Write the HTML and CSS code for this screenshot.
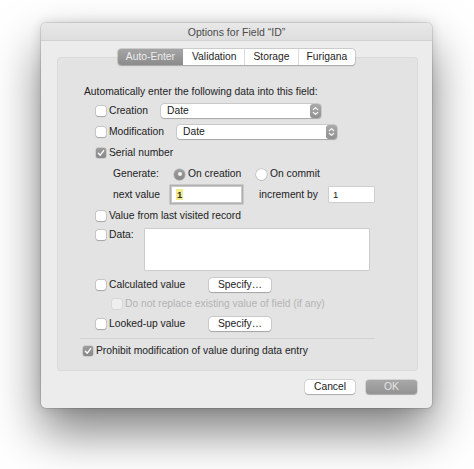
FILE: index.html
```html
<!DOCTYPE html>
<html>
<head>
<meta charset="utf-8">
<link rel="stylesheet" href="styles.css">
</head>
<body>
<div class="window">
  <div class="titlebar">Options for Field “ID”</div>
  <div class="tabbar">
    <div class="tabs">
      <span class="tab selected">Auto-Enter</span>
      <span class="tab">Validation</span>
      <span class="tab">Storage</span>
      <span class="tab">Furigana</span>
    </div>
  </div>
  <div class="panel">
    <div class="heading">Automatically enter the following data into this field:</div>

    <div class="row opt gap5">
      <span class="cb"></span><span class="lbl w-creation">Creation</span>
      <span class="popup"><span class="popup-text">Date</span><span class="stepper"><svg viewBox="0 0 11 14" width="11" height="14"><path d="M3.3 5.6 L5.5 3.6 L7.7 5.6 M3.3 8.4 L5.5 10.4 L7.7 8.4" fill="none" stroke="#fff" stroke-width="1.2" stroke-linecap="round" stroke-linejoin="round"/></svg></span></span>
    </div>

    <div class="row opt">
      <span class="cb"></span><span class="lbl w-modification">Modification</span>
      <span class="popup"><span class="popup-text">Date</span><span class="stepper"><svg viewBox="0 0 11 14" width="11" height="14"><path d="M3.3 5.6 L5.5 3.6 L7.7 5.6 M3.3 8.4 L5.5 10.4 L7.7 8.4" fill="none" stroke="#fff" stroke-width="1.2" stroke-linecap="round" stroke-linejoin="round"/></svg></span></span>
    </div>

    <div class="row opt">
      <span class="cb checked"><svg viewBox="0 0 10 10" width="10" height="10"><path d="M2.4 5.2 L4.3 7.2 L7.7 2.7" fill="none" stroke="#fff" stroke-width="1.4" stroke-linecap="round" stroke-linejoin="round"/></svg></span><span class="lbl">Serial number</span>
    </div>

    <div class="row sub">
      <span class="lbl w-generate">Generate:</span>
      <span class="radio on"></span><span class="lbl w-oncreation">On creation</span>
      <span class="radio"></span><span class="lbl">On commit</span>
    </div>

    <div class="row sub field-row gap6">
      <span class="lbl w-nextvalue">next value</span>
      <span class="field focused"><span class="hl">1</span></span>
      <span class="lbl w-increment">increment by</span>
      <span class="field small">1</span>
    </div>

    <div class="row opt">
      <span class="cb"></span><span class="lbl">Value from last visited record</span>
    </div>

    <div class="row opt data-row gap6">
      <span class="cb"></span><span class="lbl w-data">Data:</span>
      <span class="textarea"></span>
    </div>

    <div class="row opt gap8">
      <span class="cb"></span><span class="lbl w-calc">Calculated value</span>
      <span class="btn specify">Specify…</span>
    </div>

    <div class="row sub-cb gap5">
      <span class="cb disabled"></span><span class="lbl dim">Do not replace existing value of field (if any)</span>
    </div>

    <div class="row opt gap6">
      <span class="cb"></span><span class="lbl w-calc">Looked-up value</span>
      <span class="btn specify">Specify…</span>
    </div>

    <div class="separator"></div>

    <div class="row top-opt gap5">
      <span class="cb checked"><svg viewBox="0 0 10 10" width="10" height="10"><path d="M2.4 5.2 L4.3 7.2 L7.7 2.7" fill="none" stroke="#fff" stroke-width="1.4" stroke-linecap="round" stroke-linejoin="round"/></svg></span><span class="lbl">Prohibit modification of value during data entry</span>
    </div>
  </div>
  <div class="buttons">
    <span class="btn cancel">Cancel</span>
    <span class="btn ok">OK</span>
  </div>
</div>
</body>
</html>
```

FILE: styles.css
```css
html, body {
  margin: 0;
  padding: 0;
}
body {
  width: 474px;
  height: 469px;
  overflow: hidden;
  background: #ffffff;
  padding: 23px 0 0 41px;
  box-sizing: border-box;
  font-family: "Liberation Sans", Arial, sans-serif;
  font-size: 10.3px;
  color: #222222;
}
.window {
  width: 391px;
  height: 385px;
  box-sizing: border-box;
  background: #ececec;
  border-radius: 5px;
  box-shadow: 0 24px 48px rgba(0, 0, 0, 0.5), 0 0 12px rgba(0, 0, 0, 0.14), 0 0 0 1px rgba(0, 0, 0, 0.1);
}
.titlebar {
  height: 18px;
  line-height: 18px;
  text-align: center;
  font-size: 10.5px;
  color: #4b4b4b;
  background: linear-gradient(#e8e8e8, #dedede);
  border-bottom: 1px solid #d2d2d2;
  box-sizing: border-box;
  border-radius: 5px 5px 0 0;
}
.tabbar {
  margin-top: 8px;
  display: flex;
  justify-content: center;
  position: relative;
  z-index: 1;
}
.tabs {
  display: flex;
  height: 16px;
  background: #ffffff;
  border-radius: 3px;
  box-shadow: 0 0 0 0.5px rgba(0, 0, 0, 0.2), 0 0.5px 1.5px rgba(0, 0, 0, 0.2);
}
.tab {
  padding: 0 8px;
  line-height: 16px;
  border-left: 1px solid #dcdcdc;
  color: #1e1e1e;
}
.tab:first-child {
  border-left: none;
}
.tab.selected {
  background: linear-gradient(#a5a5a5, #8b8b8b);
  color: #ededed;
  border-radius: 3px 0 0 3px;
}
.tab.selected + .tab {
  border-left-color: transparent;
}
.panel {
  margin: -8px 14px 0 16px;
  height: 314px;
  box-sizing: border-box;
  padding-top: 28px;
  background: #e3e3e3;
  border-radius: 4px;
  box-shadow: inset 0 0 0 1px rgba(0, 0, 0, 0.04);
}
.heading {
  line-height: 14px;
  padding-left: 27px;
}
.row {
  display: flex;
  align-items: center;
  height: 14px;
  margin-top: 7px;
  white-space: nowrap;
}
.row.gap5 { margin-top: 5px; }
.row.gap6 { margin-top: 6px; }
.row.gap8 { margin-top: 8px; }
.row.opt { padding-left: 39px; }
.row.sub { padding-left: 56px; }
.row.sub-cb { padding-left: 55px; }
.row.top-opt { padding-left: 26px; }
.row.field-row { height: 15px; }
.row.data-row {
  height: 41px;
  align-items: flex-start;
}
.data-row .cb { margin-top: 1px; }
.data-row .lbl { line-height: 12px; margin-top: 0; }

.lbl { line-height: 14px; }
.lbl.dim { color: #b3b3b3; }
.w-creation { width: 52px; }
.w-modification { width: 68px; }
.w-generate { width: 61px; }
.w-oncreation { width: 68px; }
.w-nextvalue { width: 59px; }
.w-increment { width: 70px; margin-left: 18px; }
.w-data { width: 36px; }
.w-calc { width: 100px; }

.cb {
  width: 10px;
  height: 10px;
  flex: none;
  box-sizing: border-box;
  background: #ffffff;
  border-radius: 2px;
  box-shadow: 0 0 0 0.5px rgba(0, 0, 0, 0.22), 0 0.5px 1px rgba(0, 0, 0, 0.18);
  margin-right: 3px;
  display: flex;
}
.cb.checked {
  background: linear-gradient(#9c9c9c, #888888);
  box-shadow: 0 0 0 0.5px rgba(0, 0, 0, 0.2);
}
.cb.disabled {
  background: #efefef;
  box-shadow: 0 0 0 0.5px rgba(0, 0, 0, 0.1);
}
.radio {
  width: 11px;
  height: 11px;
  flex: none;
  box-sizing: border-box;
  border-radius: 50%;
  background: #ffffff;
  box-shadow: 0 0 0 0.5px rgba(0, 0, 0, 0.22), 0 0.5px 1px rgba(0, 0, 0, 0.18);
  margin-right: 3px;
  display: flex;
  align-items: center;
  justify-content: center;
}
.radio.on {
  background: linear-gradient(#9e9e9e, #888888);
}
.radio.on::after {
  content: "";
  width: 4px;
  height: 4px;
  border-radius: 50%;
  background: #f4f4f4;
}
.popup {
  width: 160px;
  height: 14px;
  flex: none;
  background: #ffffff;
  border-radius: 3px;
  box-shadow: 0 0 0 0.5px rgba(0, 0, 0, 0.2), 0 0.5px 1px rgba(0, 0, 0, 0.18);
  display: flex;
  align-items: center;
  justify-content: space-between;
}
.popup-text {
  padding-left: 6px;
  line-height: 14px;
}
.stepper {
  width: 11px;
  height: 14px;
  background: linear-gradient(#aaaaaa, #909090);
  border-radius: 3px;
  display: flex;
}
.field {
  height: 15px;
  flex: none;
  background: #ffffff;
  box-sizing: border-box;
  padding-left: 4px;
  line-height: 15px;
  box-shadow: 0 0 0 0.5px rgba(0, 0, 0, 0.18);
  font-size: 9.5px;
}
.field.focused {
  width: 69px;
  box-shadow: 0 0 0 1px #c8c8c8, 0 0 0 2.5px #b0b0b0;
}
.field.small {
  width: 45px;
}
.hl {
  background: #f3ec8f;
  padding: 0 1px;
  font-weight: bold;
  color: #333;
}
.textarea {
  width: 224px;
  height: 41px;
  flex: none;
  background: #ffffff;
  box-shadow: 0 0 0 0.5px rgba(0, 0, 0, 0.2);
}
.btn {
  height: 14px;
  line-height: 14px;
  text-align: center;
  border-radius: 3px;
  background: #ffffff;
  box-shadow: 0 0 0 0.5px rgba(0, 0, 0, 0.18), 0 0.5px 1px rgba(0, 0, 0, 0.2);
  flex: none;
}
.btn.specify {
  width: 62px;
}
.separator {
  margin: 7px 0 0 23px;
  width: 295px;
  height: 1px;
  background: #d3d3d3;
}
.buttons {
  display: flex;
  justify-content: flex-end;
  gap: 11px;
  margin-top: 9px;
  padding-right: 15px;
}
.btn.cancel {
  width: 50px;
}
.btn.ok {
  width: 51px;
  background: linear-gradient(#a8a8a8, #939393);
  color: #e4e4e4;
}
```
